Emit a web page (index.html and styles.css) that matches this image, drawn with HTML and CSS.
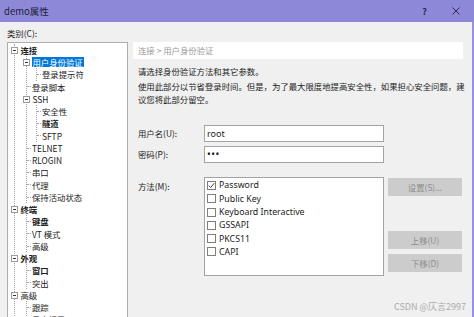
FILE: index.html
```html
<!DOCTYPE html>
<html lang="zh-CN">
<head>
    <meta charset="UTF-8">
    <title>demo属性</title>
    <link rel="stylesheet" href="styles.css">
</head>
<body>
    <div class="window">
        <div class="titlebar">
            <span class="title">demo属性</span>
            <span class="help">?</span>
            <svg class="close" width="8" height="8" viewBox="0 0 8 8">
                <path d="M0.5 0.5 L7.5 7.5 M7.5 0.5 L0.5 7.5" stroke="#2b2950" stroke-width="1"/>
            </svg>
        </div>

        <div class="dialog">
            <!-- category tree -->
            <div class="category">
                <div class="category-label">类别(C):</div>
                <div class="tree-box">
                    <ul class="tree root">
                        <li>
                            <div class="row boxed"><svg class="box" viewBox="0 0 7 7"><rect x="0.5" y="0.5" width="6" height="6" fill="#fff" stroke="#9a9a9a"/><path d="M2 3.5 H5" stroke="#333"/></svg><span class="bold">连接</span></div>
                            <ul class="tree l1">
                                <li>
                                    <div class="row boxed"><svg class="box" viewBox="0 0 7 7"><rect x="0.5" y="0.5" width="6" height="6" fill="#fff" stroke="#9a9a9a"/><path d="M2 3.5 H5" stroke="#333"/></svg><span class="selected">用户身份验证</span></div>
                                    <ul class="tree l2">
                                        <li><div class="row"><i class="stub"></i><span>登录提示符</span></div></li>
                                    </ul>
                                </li>
                                <li><div class="row"><i class="stub"></i><span>登录脚本</span></div></li>
                                <li>
                                    <div class="row boxed"><svg class="box" viewBox="0 0 7 7"><rect x="0.5" y="0.5" width="6" height="6" fill="#fff" stroke="#9a9a9a"/><path d="M2 3.5 H5" stroke="#333"/></svg><span>SSH</span></div>
                                    <ul class="tree l2">
                                        <li><div class="row"><i class="stub"></i><span>安全性</span></div></li>
                                        <li><div class="row"><i class="stub"></i><span class="bold">隧道</span></div></li>
                                        <li><div class="row"><i class="stub"></i><span>SFTP</span></div></li>
                                    </ul>
                                </li>
                                <li><div class="row"><i class="stub"></i><span>TELNET</span></div></li>
                                <li><div class="row"><i class="stub"></i><span>RLOGIN</span></div></li>
                                <li><div class="row"><i class="stub"></i><span>串口</span></div></li>
                                <li><div class="row"><i class="stub"></i><span>代理</span></div></li>
                                <li><div class="row"><i class="stub"></i><span>保持活动状态</span></div></li>
                            </ul>
                        </li>
                        <li>
                            <div class="row boxed"><svg class="box" viewBox="0 0 7 7"><rect x="0.5" y="0.5" width="6" height="6" fill="#fff" stroke="#9a9a9a"/><path d="M2 3.5 H5" stroke="#333"/></svg><span class="bold">终端</span></div>
                            <ul class="tree l1">
                                <li><div class="row"><i class="stub"></i><span class="bold">键盘</span></div></li>
                                <li><div class="row"><i class="stub"></i><span>VT 模式</span></div></li>
                                <li><div class="row"><i class="stub"></i><span>高级</span></div></li>
                            </ul>
                        </li>
                        <li>
                            <div class="row boxed"><svg class="box" viewBox="0 0 7 7"><rect x="0.5" y="0.5" width="6" height="6" fill="#fff" stroke="#9a9a9a"/><path d="M2 3.5 H5" stroke="#333"/></svg><span class="bold">外观</span></div>
                            <ul class="tree l1">
                                <li><div class="row"><i class="stub"></i><span class="bold">窗口</span></div></li>
                                <li><div class="row"><i class="stub"></i><span>突出</span></div></li>
                            </ul>
                        </li>
                        <li>
                            <div class="row boxed"><svg class="box" viewBox="0 0 7 7"><rect x="0.5" y="0.5" width="6" height="6" fill="#fff" stroke="#9a9a9a"/><path d="M2 3.5 H5" stroke="#333"/></svg><span>高级</span></div>
                            <ul class="tree l1">
                                <li><div class="row"><i class="stub"></i><span>跟踪</span></div></li>
                                <li><div class="row"><i class="stub"></i><span>日志记录</span></div></li>
                            </ul>
                        </li>
                    </ul>
                </div>
            </div>

            <!-- settings panel -->
            <div class="panel">
                <div class="breadcrumb">连接 &gt; 用户身份验证</div>
                <p class="intro">请选择身份验证方法和其它参数。</p>
                <p class="intro note">使用此部分以节省登录时间。但是，为了最大限度地提高安全性，如果担心安全问题，建<br>议您将此部分留空。</p>

                <div class="form">
                    <label class="field-label" for="user">用户名(U):</label>
                    <input class="field" id="user" type="text" value="root">
                    <span></span>

                    <label class="field-label" for="pass">密码(P):</label>
                    <input class="field password" id="pass" type="password" value="abc">
                    <span></span>

                    <label class="field-label method-row top">方法(M):</label>
                    <div class="listbox method-row">
                        <div class="check-row"><span class="check checked"><svg width="7" height="7" viewBox="0 0 7 7"><path d="M0.8 3.6 L2.7 5.5 L6.2 1.2" fill="none" stroke="#333" stroke-width="0.9"/></svg></span>Password</div>
                        <div class="check-row"><span class="check"></span>Public Key</div>
                        <div class="check-row"><span class="check"></span>Keyboard Interactive</div>
                        <div class="check-row"><span class="check"></span>GSSAPI</div>
                        <div class="check-row"><span class="check"></span>PKCS11</div>
                        <div class="check-row"><span class="check"></span>CAPI</div>
                    </div>
                    <div class="buttons method-row">
                        <button disabled>设置(S)...</button>
                        <button class="move-up" disabled>上移(U)</button>
                        <button disabled>下移(D)</button>
                    </div>
                </div>
            </div>
        </div>

        <div class="watermark">CSDN @仄言2997</div>
    </div>
</body>
</html>
```

FILE: styles.css
```css
* {
    box-sizing: border-box;
}

body {
    margin: 0;
    width: 474px;
    height: 317px;
    overflow: hidden;
    font-family: "Noto Sans CJK SC", "Noto Sans", sans-serif;
    font-size: 8.4px;
    color: #1b1b1b;
    background-color: #f0f0f0;
}

.window {
    position: relative;
    height: 317px;
}

/* Title bar */
.titlebar {
    height: 22px;
    display: flex;
    align-items: center;
    padding: 0 14px 0 4px;
    background-color: #8d89d8;
}

.title {
    flex: 1;
    font-size: 9.5px;
    color: #1f1d3d;
}

.help {
    font-size: 9px;
    font-weight: bold;
    color: #2b2950;
    margin-right: 25px;
}

/* Dialog body */
.dialog {
    display: flex;
    height: 295px;
    padding: 4px 0 0 7px;
    border-right: 2px solid #9792db;
}

.category {
    width: 121px;
    display: flex;
    flex-direction: column;
}

.category-label {
    height: 14px;
    line-height: 14px;
    margin-bottom: 2px;
}

.tree-box {
    flex: 1;
    background-color: #ffffff;
    border: 1px solid #adadad;
    border-bottom: none;
    padding-top: 0.9px;
    overflow: hidden;
}

/* Tree */
.tree {
    list-style: none;
    margin: 0;
    padding: 0;
    border-left: 1px dotted #a6a6a6;
}

.tree.root {
    margin-left: 6px;
}

.tree.l1 {
    margin-left: 11px;
}

.tree.l2 {
    margin-left: 9px;
}

.row {
    height: 12.25px;
    line-height: 12.25px;
    display: flex;
    align-items: center;
    white-space: nowrap;
}

.row.boxed {
    margin-left: -4px;
}

.box {
    width: 7px;
    height: 7px;
    flex: none;
    margin-right: 2.5px;
}

.stub {
    width: 4px;
    flex: none;
    border-top: 1px dotted #a6a6a6;
    margin-right: 1px;
}

.bold {
    font-weight: bold;
}

.selected {
    background-color: #0078d7;
    color: #ffffff;
    line-height: 10px;
    padding: 0 1px;
    margin-left: -1px;
}

/* Right panel */
.panel {
    width: 330px;
    margin-left: 5px;
    padding-top: 16px;
}

.breadcrumb {
    height: 17px;
    line-height: 17px;
    padding-left: 5px;
    background-color: #ffffff;
    color: #9a9a9a;
}

.intro {
    margin: 6px 0 0 5px;
    line-height: 13px;
    white-space: nowrap;
}

.intro.note {
    margin-top: 1.5px;
}

.form {
    display: grid;
    grid-template-columns: 67px 180px 74px;
    column-gap: 4px;
    row-gap: 4px;
    margin-top: 19px;
}

.field-label {
    align-self: center;
    padding-left: 5px;
    line-height: 13px;
}

.field-label.top {
    align-self: start;
    padding-top: 3.5px;
}

.field {
    height: 17px;
    margin: 0;
    padding: 0 2px;
    border: 1px solid #a3a3a3;
    background-color: #ffffff;
    font-family: "Noto Sans", sans-serif;
    font-size: 9px;
    color: #1b1b1b;
    outline: none;
}

.field.password {
    font-size: 10px;
    letter-spacing: 0.5px;
}

.method-row {
    margin-top: 10px;
}

.listbox {
    height: 99.5px;
    background-color: #ffffff;
    border: 1px solid #a3a3a3;
    padding: 1.3px 2px;
}

.check-row {
    height: 13.3px;
    display: flex;
    align-items: center;
    font-family: "Noto Sans", sans-serif;
    font-size: 8.8px;
    white-space: nowrap;
}

.check {
    width: 9px;
    height: 9px;
    flex: none;
    margin-right: 3px;
    border: 1px solid #7d7d7d;
    background-color: #ffffff;
    display: flex;
    align-items: center;
    justify-content: center;
}

.buttons {
    display: flex;
    flex-direction: column;
    gap: 4.5px;
    padding-top: 1px;
}

.buttons button {
    height: 18.5px;
    margin: 0;
    padding: 0;
    border: 1px solid #cccccc;
    background-color: #cccccc;
    color: #8c8c8c;
    font-family: "Noto Sans CJK SC", sans-serif;
    font-size: 8.4px;
}

.buttons .move-up {
    margin-top: 30px;
}

/* CSDN watermark over the corner */
.watermark {
    position: absolute;
    right: 8px;
    bottom: 4px;
    font-size: 9px;
    color: #ababab;
    white-space: nowrap;
}
```
